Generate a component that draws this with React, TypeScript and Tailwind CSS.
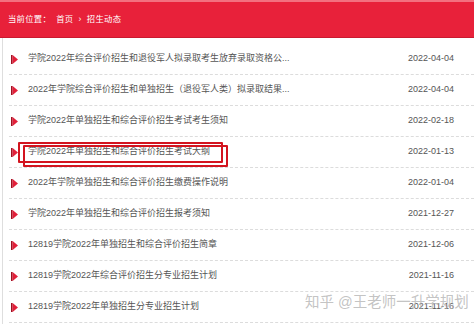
import React from "react";

const rows = [
  { title: "学院2022年综合评价招生和退役军人拟录取考生放弃录取资格公...", date: "2022-04-04" },
  { title: "2022年学院综合评价招生和单独招生（退役军人类）拟录取结果...", date: "2022-04-04" },
  { title: "学院2022年单独招生和综合评价招生考试考生须知", date: "2022-02-18" },
  { title: "学院2022年单独招生和综合评价招生考试大纲", date: "2022-01-13" },
  { title: "2022年学院单独招生和综合评价招生缴费操作说明", date: "2022-01-04" },
  { title: "学院2022年单独招生和综合评价招生报考须知", date: "2021-12-27" },
  { title: "12819学院2022年单独招生和综合评价招生简章", date: "2021-12-06" },
  { title: "12819学院2022年综合评价招生分专业招生计划", date: "2021-11-16" },
  { title: "12819学院2022年单独招生分专业招生计划", date: "2021-11-16" },
];

function Arrow() {
  return (
    <svg width="7" height="9" viewBox="0 0 7 9" className="shrink-0">
      <rect x="0" y="0" width="1.6" height="9" fill="#9e1022" />
      <polygon points="1.6,0 7,4.5 1.6,9" fill="#e2203a" />
    </svg>
  );
}

export default function App() {
  return (
    <div className="relative w-[474px] h-[324px] overflow-hidden bg-white font-['Liberation_Sans','Noto_Sans_CJK_SC',sans-serif]">
      {/* header */}
      <div className="h-[38px] bg-[#e8213a] border-t-2 border-[#f3707f] border-b border-b-[#c91a30] flex items-center pl-[8px]">
        <span className="text-[8.3px] text-white tracking-[0.3px]">
          当前位置：&nbsp; 首页 &nbsp;›&nbsp; 招生动态
        </span>
      </div>

      {/* list */}
      <div className="border-l border-[#dedede] ml-[2px] pl-[6px] pt-[6px] h-[286px]">
        {rows.map((r, i) => (
          <div
            key={i}
            className="h-[31px] flex items-center border-b border-dashed border-[#dcdcdc] pl-[2px] pr-[20px]"
          >
            <Arrow />
            <span className="ml-[10px] flex-1 text-[9px] text-[#555] whitespace-nowrap">
              {r.title}
            </span>
            <span className="text-[9px] text-[#555]">{r.date}</span>
          </div>
        ))}
      </div>

      {/* hand-drawn highlight */}
      <div className="absolute left-[18px] top-[142px] w-[205px] h-[21px] border-2 border-[#d3141f] rounded-[1px]" />
      <div className="absolute left-[23px] top-[145px] w-[205px] h-[22px] border-2 border-[#d3141f] rounded-[1px]" />

      {/* watermark */}
      <div className="absolute left-[305px] top-[292px] text-[14.5px] text-[#b4b4b4]/80 whitespace-nowrap">
        知乎 @王老师一升学规划
      </div>
    </div>
  );
}
